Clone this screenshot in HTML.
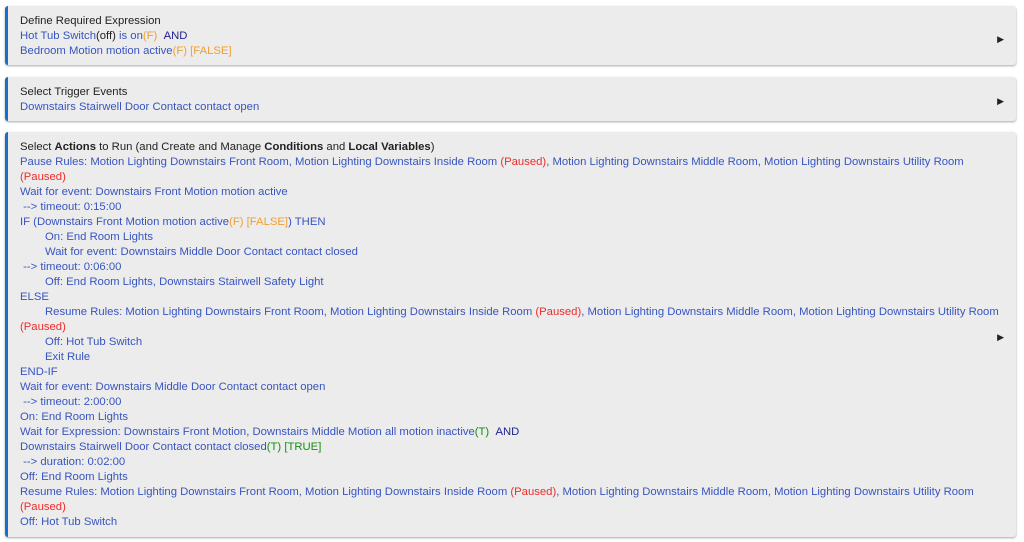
<!DOCTYPE html>
<html><head><style>
body{margin:0;background:#fff;font-family:"Liberation Sans",Arial,sans-serif;font-size:11.3px;line-height:15px;color:#222;}
.p{position:absolute;left:5px;width:1011px;background:#ececec;border-left:3px solid #1a6fc4;border-radius:3px;box-shadow:0 1px 2px rgba(0,0,0,.35);box-sizing:border-box;padding:8px 0 0 12px;white-space:nowrap;}
.a{position:absolute;right:12px;font-size:9px;color:#222}
.b{color:#3755c0}.o{color:#f0a030}.r{color:#ee2b2b}.g{color:#139013}.n{color:#1e1e90}.k{color:#222}
.i{padding-left:25px}
</style></head><body>
<div class="p" style="top:6px;height:59px">
<div>Define Required Expression</div>
<div class="b">Hot Tub Switch<span class="k">(off)</span> is on<span class="o">(F)</span> &nbsp;<span class="n">AND</span></div>
<div class="b">Bedroom Motion motion active<span class="o">(F) [FALSE]</span></div>
<div class="a" style="top:26px">&#9654;</div>
</div>
<div class="p" style="top:77px;height:44px">
<div>Select Trigger Events</div>
<div class="b">Downstairs Stairwell Door Contact contact open</div>
<div class="a" style="top:17px">&#9654;</div>
</div>
<div class="p" style="top:132px;height:405px">
<div>Select <b>Actions</b> to Run (and Create and Manage <b>Conditions</b> and <b>Local Variables</b>)</div>
<div class="b">Pause Rules: Motion Lighting Downstairs Front Room, Motion Lighting Downstairs Inside Room <span class="r">(Paused)</span>, Motion Lighting Downstairs Middle Room, Motion Lighting Downstairs Utility Room<br><span class="r">(Paused)</span></div>
<div class="b">Wait for event: Downstairs Front Motion motion active</div>
<div class="b">&nbsp;--&gt; timeout: 0:15:00</div>
<div class="b">IF (Downstairs Front Motion motion active<span class="o">(F) [FALSE]</span>) THEN</div>
<div class="b i">On: End Room Lights</div>
<div class="b i">Wait for event: Downstairs Middle Door Contact contact closed</div>
<div class="b">&nbsp;--&gt; timeout: 0:06:00</div>
<div class="b i">Off: End Room Lights, Downstairs Stairwell Safety Light</div>
<div class="b">ELSE</div>
<div class="b i">Resume Rules: Motion Lighting Downstairs Front Room, Motion Lighting Downstairs Inside Room <span class="r">(Paused)</span>, Motion Lighting Downstairs Middle Room, Motion Lighting Downstairs Utility Room</div>
<div class="r">(Paused)</div>
<div class="b i">Off: Hot Tub Switch</div>
<div class="b i">Exit Rule</div>
<div class="b">END-IF</div>
<div class="b">Wait for event: Downstairs Middle Door Contact contact open</div>
<div class="b">&nbsp;--&gt; timeout: 2:00:00</div>
<div class="b">On: End Room Lights</div>
<div class="b">Wait for Expression: Downstairs Front Motion, Downstairs Middle Motion all motion inactive<span class="g">(T)</span> &nbsp;<span class="n">AND</span></div>
<div class="b">Downstairs Stairwell Door Contact contact closed<span class="g">(T) [TRUE]</span></div>
<div class="b">&nbsp;--&gt; duration: 0:02:00</div>
<div class="b">Off: End Room Lights</div>
<div class="b">Resume Rules: Motion Lighting Downstairs Front Room, Motion Lighting Downstairs Inside Room <span class="r">(Paused)</span>, Motion Lighting Downstairs Middle Room, Motion Lighting Downstairs Utility Room<br><span class="r">(Paused)</span></div>
<div class="b">Off: Hot Tub Switch</div>
<div class="a" style="top:198px">&#9654;</div>
</div>
</body></html>
